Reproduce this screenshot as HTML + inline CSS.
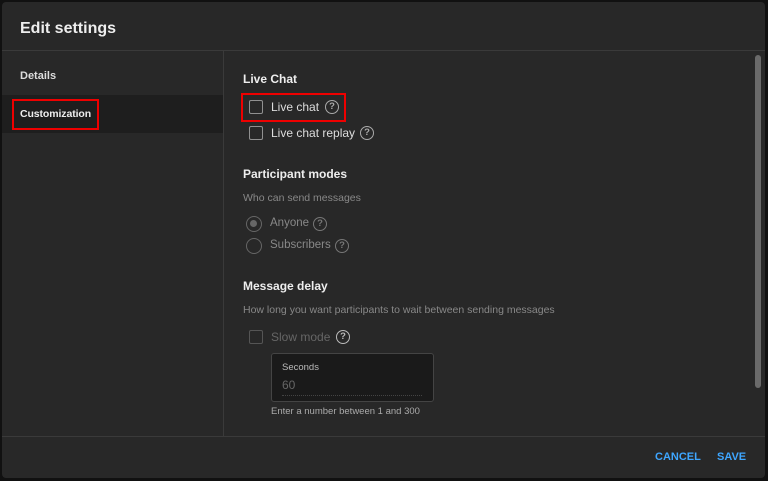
<!DOCTYPE html>
<html><head><style>
body{margin:0;width:768px;height:481px;background:#111;font-family:"Liberation Sans",sans-serif;overflow:hidden;position:relative}
.d{position:absolute;left:2px;top:2px;width:763px;height:476px;background:#282828;border-radius:4px}
.a{position:absolute;white-space:nowrap}
.cb{position:absolute;width:12px;height:12px;border:1.5px solid #909090;border-radius:2px}
.q{position:absolute;width:12px;height:12px;border:1.3px solid #aaa;border-radius:50%;font-size:9.5px;line-height:12px;text-align:center;color:#aaa;font-weight:bold}
.rd{position:absolute;width:14px;height:14px;border:1.5px solid #666;border-radius:50%}
</style></head><body>
<div class="d"></div>
<div class="a" style="left:20px;top:20px;font-size:16px;font-weight:bold;color:#eee">Edit settings</div>
<div class="a" style="left:2px;top:50px;width:763px;height:1px;background:#3a3a3a"></div>
<div class="a" style="left:223px;top:51px;width:1px;height:385px;background:#3a3a3a"></div>
<div class="a" style="left:2px;top:95px;width:221px;height:38px;background:#1e1e1e"></div>
<div class="a" style="left:20px;top:70px;font-size:11px;font-weight:bold;color:#ddd">Details</div>
<div class="a" style="left:20px;top:108px;font-size:10.5px;font-weight:bold;color:#eee;letter-spacing:-0.1px">Customization</div>
<div class="a" style="left:12px;top:99px;width:83px;height:27px;border:2px solid #e00"></div>
<div class="a" style="left:243px;top:72px;font-size:12px;font-weight:bold;color:#eee">Live Chat</div>
<div class="a" style="left:241px;top:93px;width:101px;height:25px;border:2px solid #e00"></div>
<div class="cb" style="left:249px;top:100px"></div>
<div class="a" style="left:271px;top:100px;font-size:12px;color:#ddd">Live chat</div>
<div class="q" style="left:325px;top:100px">?</div>
<div class="cb" style="left:249px;top:126px"></div>
<div class="a" style="left:271px;top:126px;font-size:12px;color:#ddd">Live chat replay</div>
<div class="q" style="left:360px;top:126px">?</div>
<div class="a" style="left:243px;top:167px;font-size:12px;font-weight:bold;color:#eee">Participant modes</div>
<div class="a" style="left:243px;top:192px;font-size:10.5px;color:#888">Who can send messages</div>
<div class="rd" style="left:246px;top:216px"></div>
<div class="a" style="left:250px;top:220px;width:7px;height:7px;border-radius:50%;background:#666"></div>
<div class="a" style="left:270px;top:217px;font-size:11.5px;color:#888">Anyone</div>
<div class="q" style="left:313px;top:217px;border-color:#777;color:#777">?</div>
<div class="rd" style="left:246px;top:238px"></div>
<div class="a" style="left:270px;top:239px;font-size:11.5px;color:#888">Subscribers</div>
<div class="q" style="left:335px;top:239px;border-color:#777;color:#777">?</div>
<div class="a" style="left:243px;top:279px;font-size:12px;font-weight:bold;color:#eee">Message delay</div>
<div class="a" style="left:243px;top:304px;font-size:10.5px;color:#888">How long you want participants to wait between sending messages</div>
<div class="cb" style="left:249px;top:330px;border-color:#555"></div>
<div class="a" style="left:271px;top:330px;font-size:12px;color:#666">Slow mode</div>
<div class="q" style="left:336px;top:330px;border-color:#bbb;color:#bbb">?</div>
<div class="a" style="left:271px;top:353px;width:161px;height:47px;background:#1a1a1a;border:1px solid #444;border-radius:3px"></div>
<div class="a" style="left:282px;top:362px;font-size:9.5px;color:#bbb">Seconds</div>
<div class="a" style="left:282px;top:378px;font-size:12px;color:#666">60</div>
<div class="a" style="left:282px;top:395px;width:140px;border-top:1px dotted #444"></div>
<div class="a" style="left:271px;top:406px;font-size:9.5px;color:#aaa">Enter a number between 1 and 300</div>
<div class="a" style="left:755px;top:55px;width:6px;height:333px;background:#6a6a6a;border-radius:3px"></div>
<div class="a" style="left:2px;top:436px;width:763px;height:1px;background:#3a3a3a"></div>
<div class="a" style="left:655px;top:451px;font-size:11px;font-weight:bold;color:#3ea6ff">CANCEL</div>
<div class="a" style="left:717px;top:451px;font-size:11px;font-weight:bold;color:#3ea6ff">SAVE</div>
</body></html>
